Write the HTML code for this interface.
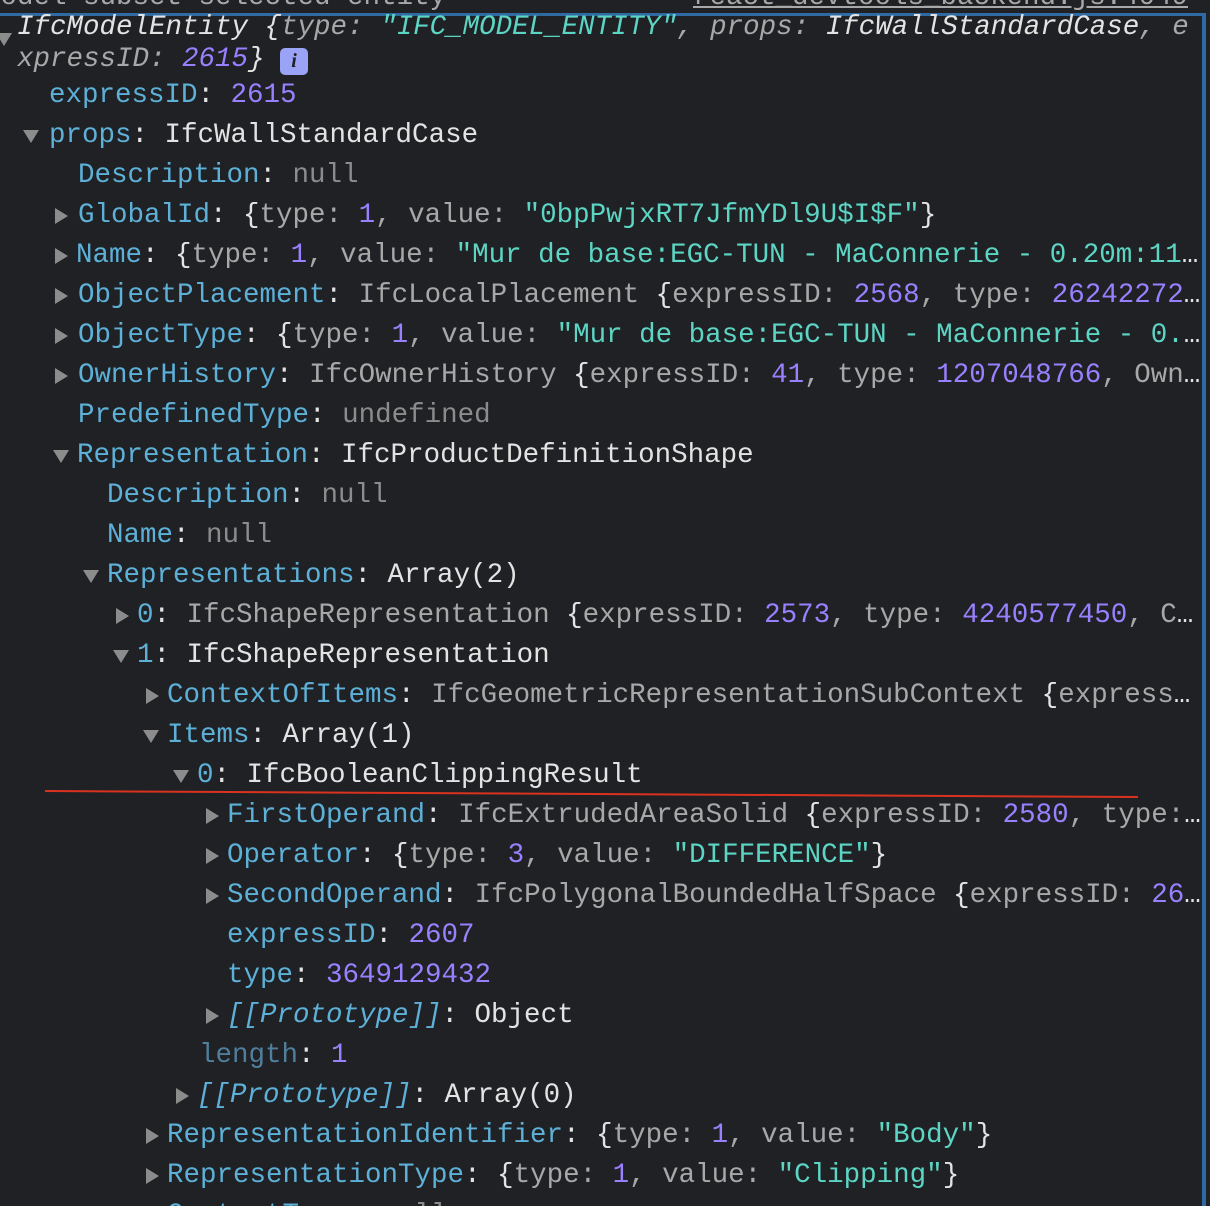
<!DOCTYPE html>
<html><head><meta charset="utf-8"><style>
html,body{margin:0;padding:0;background:#202124;width:1210px;height:1206px;overflow:hidden;position:relative}
.l{position:absolute;height:40px;line-height:40px;font-family:"Liberation Mono","DejaVu Sans Mono",monospace;font-size:27.5px;color:#e3e3e3;white-space:pre;overflow:hidden;text-overflow:ellipsis}
.k{color:#5db0d7}.d{color:#4f7f9c}.n{color:#9980ff}.s{color:#5cd5c4}.g{color:#a8a8a8}.u{color:#8c8c8c}.i{font-style:italic}
.tr{position:absolute;width:0;height:0}
.r{border-top:8px solid transparent;border-bottom:8px solid transparent;border-left:13px solid #8c8c8c}
.dn{border-left:8px solid transparent;border-right:8px solid transparent;border-top:13px solid #8c8c8c}
</style></head><body>
<div class="l g" style="left:-16px;top:-22px;width:700px">model subset selected entity</div>
<div class="l g" style="left:693px;top:-22px;text-decoration:underline">react_devtools_backend.js:4049</div>
<div style="position:absolute;left:0;top:13px;width:1206px;height:3px;background:#2f6aa3"></div>
<div style="position:absolute;left:1202px;top:13px;width:4px;height:1193px;background:#2f6aa3"></div>
<div class="tr dn" style="left:-4px;top:33px"></div>
<div class="l i" style="left:17px;top:8px;width:1183px;overflow:hidden;text-overflow:clip">IfcModelEntity {<span class="g">type: </span><span class="s">"IFC_MODEL_ENTITY"</span><span class="g">, props: </span>IfcWallStandardCase<span class="g">, e</span></div>
<div class="l i" style="left:17px;top:40px"><span class="g">xpressID: </span><span class="n">2615</span>}</div>
<div style="position:absolute;left:280px;top:48px;width:28px;height:27px;border-radius:5px;background:#9aa3f5;color:#202124;font:italic bold 20px 'Liberation Serif',serif;text-align:center;line-height:27px">i</div>

<div class="l" style="left:49px;top:76px"><span class="k">expressID</span>: <span class="n">2615</span></div>
<div class="tr dn" style="left:23px;top:130px"></div>
<div class="l" style="left:49px;top:116px"><span class="k">props</span>: IfcWallStandardCase</div>
<div class="l" style="left:78px;top:156px"><span class="k">Description</span>: <span class="u">null</span></div>
<div class="tr r" style="left:55px;top:208px"></div>
<div class="l" style="left:78px;top:196px;width:1122px">{<span class="k">GlobalId</span>: {<span class="g">type: </span><span class="n">1</span>, <span class="g">value: </span><span class="s">"0bpPwjxRT7JfmYDl9U$I$F"</span>}</div>
<div class="l" style="left:78px;top:196px;width:1122px;background:#202124"><span class="k">GlobalId</span>: {<span class="g">type: </span><span class="n">1</span><span class="g">, value: </span><span class="s">"0bpPwjxRT7JfmYDl9U$I$F"</span>}</div>
<div class="tr r" style="left:55px;top:248px"></div>
<div class="l" style="left:76px;top:236px;width:1125px"><span class="k">Name</span>: {<span class="g">type: </span><span class="n">1</span><span class="g">, value: </span><span class="s">"Mur de base:EGC-TUN - MaConnerie - 0.20m:1138"</span>}</div>
<div class="tr r" style="left:55px;top:288px"></div>
<div class="l" style="left:78px;top:276px;width:1123px"><span class="k">ObjectPlacement</span>: <span class="g">IfcLocalPlacement </span>{<span class="g">expressID: </span><span class="n">2568</span><span class="g">, type: </span><span class="n">2624227202</span><span class="g">, PlacementRelTo</span></div>
<div class="tr r" style="left:55px;top:328px"></div>
<div class="l" style="left:78px;top:316px;width:1123px"><span class="k">ObjectType</span>: {<span class="g">type: </span><span class="n">1</span><span class="g">, value: </span><span class="s">"Mur de base:EGC-TUN - MaConnerie - 0.20m"</span>}</div>
<div class="tr r" style="left:55px;top:368px"></div>
<div class="l" style="left:78px;top:356px;width:1123px"><span class="k">OwnerHistory</span>: <span class="g">IfcOwnerHistory </span>{<span class="g">expressID: </span><span class="n">41</span><span class="g">, type: </span><span class="n">1207048766</span><span class="g">, OwningUser</span></div>
<div class="l" style="left:78px;top:396px"><span class="k">PredefinedType</span>: <span class="u">undefined</span></div>
<div class="tr dn" style="left:53px;top:450px"></div>
<div class="l" style="left:77px;top:436px"><span class="k">Representation</span>: IfcProductDefinitionShape</div>
<div class="l" style="left:107px;top:476px"><span class="k">Description</span>: <span class="u">null</span></div>
<div class="l" style="left:107px;top:516px"><span class="k">Name</span>: <span class="u">null</span></div>
<div class="tr dn" style="left:83px;top:570px"></div>
<div class="l" style="left:107px;top:556px"><span class="k">Representations</span>: Array(2)</div>
<div class="tr r" style="left:116px;top:608px"></div>
<div class="l" style="left:137px;top:596px;width:1064px"><span class="k">0</span>: <span class="g">IfcShapeRepresentation </span>{<span class="g">expressID: </span><span class="n">2573</span><span class="g">, type: </span><span class="n">4240577450</span><span class="g">, ContextOfItems</span></div>
<div class="tr dn" style="left:113px;top:650px"></div>
<div class="l" style="left:137px;top:636px"><span class="k">1</span>: IfcShapeRepresentation</div>
<div class="tr r" style="left:146px;top:688px"></div>
<div class="l" style="left:167px;top:676px;width:1027px"><span class="k">ContextOfItems</span>: <span class="g">IfcGeometricRepresentationSubContext </span>{<span class="g">expressID: 2</span></div>
<div class="tr dn" style="left:143px;top:730px"></div>
<div class="l" style="left:167px;top:716px"><span class="k">Items</span>: Array(1)</div>
<div class="tr dn" style="left:173px;top:770px"></div>
<div class="l" style="left:197px;top:756px"><span class="k">0</span>: IfcBooleanClippingResult</div>
<svg style="position:absolute;left:0;top:0" width="1210" height="1206"><line x1="45" y1="791" x2="1138" y2="797" stroke="#d9321f" stroke-width="2"/></svg>
<div class="tr r" style="left:206px;top:808px"></div>
<div class="l" style="left:227px;top:796px;width:974px"><span class="k">FirstOperand</span>: <span class="g">IfcExtrudedAreaSolid </span>{<span class="g">expressID: </span><span class="n">2580</span><span class="g">, type: 477187591</span></div>
<div class="tr r" style="left:206px;top:848px"></div>
<div class="l" style="left:227px;top:836px"><span class="k">Operator</span>: {<span class="g">type: </span><span class="n">3</span><span class="g">, value: </span><span class="s">"DIFFERENCE"</span>}</div>
<div class="tr r" style="left:206px;top:888px"></div>
<div class="l" style="left:227px;top:876px;width:974px"><span class="k">SecondOperand</span>: <span class="g">IfcPolygonalBoundedHalfSpace </span>{<span class="g">expressID: </span><span class="n">2600</span></div>
<div class="l" style="left:227px;top:916px"><span class="k">expressID</span>: <span class="n">2607</span></div>
<div class="l" style="left:227px;top:956px"><span class="k">type</span>: <span class="n">3649129432</span></div>
<div class="tr r" style="left:206px;top:1008px"></div>
<div class="l" style="left:227px;top:996px"><span class="k i">[[Prototype]]</span>: Object</div>
<div class="l" style="left:199px;top:1036px"><span class="d">length</span>: <span class="n">1</span></div>
<div class="tr r" style="left:176px;top:1088px"></div>
<div class="l" style="left:197px;top:1076px"><span class="k i">[[Prototype]]</span>: Array(0)</div>
<div class="tr r" style="left:146px;top:1128px"></div>
<div class="l" style="left:167px;top:1116px"><span class="k">RepresentationIdentifier</span>: {<span class="g">type: </span><span class="n">1</span><span class="g">, value: </span><span class="s">"Body"</span>}</div>
<div class="tr r" style="left:146px;top:1168px"></div>
<div class="l" style="left:167px;top:1156px"><span class="k">RepresentationType</span>: {<span class="g">type: </span><span class="n">1</span><span class="g">, value: </span><span class="s">"Clipping"</span>}</div>
<div class="l" style="left:167px;top:1196px"><span class="k">ContextType</span>: <span class="u">null</span></div>
</body></html>
